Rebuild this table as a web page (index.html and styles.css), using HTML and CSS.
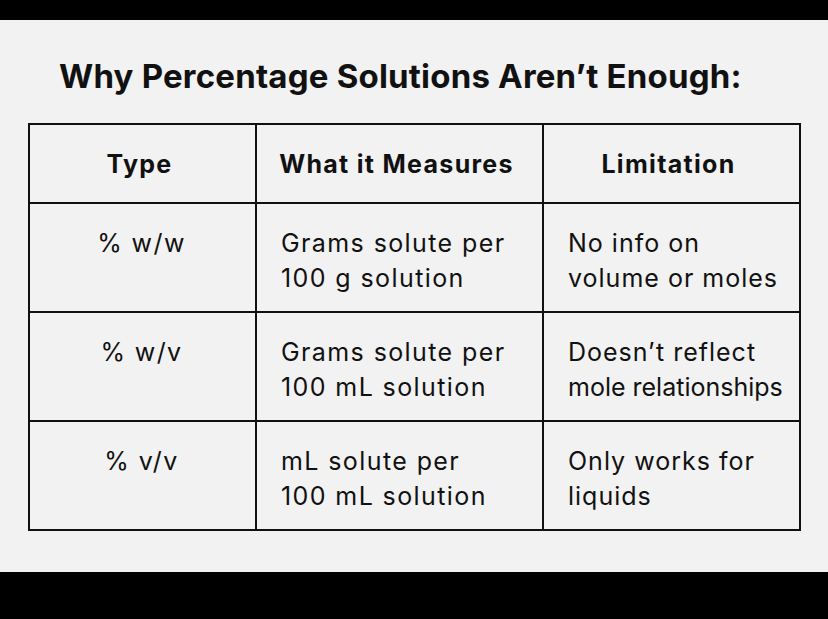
FILE: index.html
```html
<!DOCTYPE html>
<html lang="en">
<head>
<meta charset="utf-8">
<title>Why Percentage Solutions Aren't Enough</title>
<link rel="stylesheet" href="styles.css">
</head>
<body>
<div class="bar bar-top"></div>
<main class="sheet">
  <h1 class="title">Why Percentage Solutions Aren’t Enough:</h1>
  <table class="grid">
    <colgroup>
      <col class="c1">
      <col class="c2">
      <col class="c3">
    </colgroup>
    <thead>
      <tr class="head-row">
        <th>Type</th>
        <th>What it Measures</th>
        <th>Limitation</th>
      </tr>
    </thead>
    <tbody>
      <tr>
        <td class="type">% w/w</td>
        <td class="measure">Grams solute per<br>100 g solution</td>
        <td class="limit">No info on<br>volume or moles</td>
      </tr>
      <tr>
        <td class="type">% w/v</td>
        <td class="measure">Grams solute per<br>100 mL solution</td>
        <td class="limit">Doesn’t reflect<br><span class="tight">mole relationships</span></td>
      </tr>
      <tr>
        <td class="type">% v/v</td>
        <td class="measure">mL solute per<br>100 mL solution</td>
        <td class="limit">Only works for<br>liquids</td>
      </tr>
    </tbody>
  </table>
</main>
<div class="bar bar-bottom"></div>
</body>
</html>
```

FILE: styles.css
```css
html, body {
  margin: 0;
  padding: 0;
}
body {
  width: 828px;
  height: 619px;
  background: #000;
  display: flex;
  flex-direction: column;
  font-family: Inter, "Liberation Sans", sans-serif;
  color: #111;
  overflow: hidden;
}
.bar-top {
  height: 20px;
  background: #000;
}
.bar-bottom {
  height: 47px;
  background: #000;
}
.sheet {
  flex: 1;
  background: #f2f2f2;
  padding: 36px 0 0 28px;
}
.title {
  margin: 0 0 27px 31px;
  font-size: 33px;
  line-height: 40px;
  font-weight: 700;
  letter-spacing: 0.2px;
}
.grid {
  border-collapse: collapse;
  table-layout: fixed;
  width: 771px;
}
.c1 { width: 227px; }
.c2 { width: 287px; }
.c3 { width: 257px; }
.grid th,
.grid td {
  border: 2px solid #111;
}
.grid th {
  height: 77px;
  padding: 0 6px 0 0;
  font-size: 25px;
  line-height: 30px;
  font-weight: 700;
  letter-spacing: 1.3px;
  text-align: center;
  vertical-align: middle;
}
.grid td {
  height: 109px;
  box-sizing: border-box;
  padding: 22px 0 0 24px;
  font-size: 25px;
  line-height: 35px;
  font-weight: 400;
  letter-spacing: 1.4px;
  text-align: left;
  vertical-align: top;
  white-space: nowrap;
}
.grid td.type {
  text-align: center;
  padding-left: 0;
  padding-right: 2px;
}
.grid td.limit {
  letter-spacing: 1px;
}
.grid td.limit .tight {
  letter-spacing: 0;
}
```
